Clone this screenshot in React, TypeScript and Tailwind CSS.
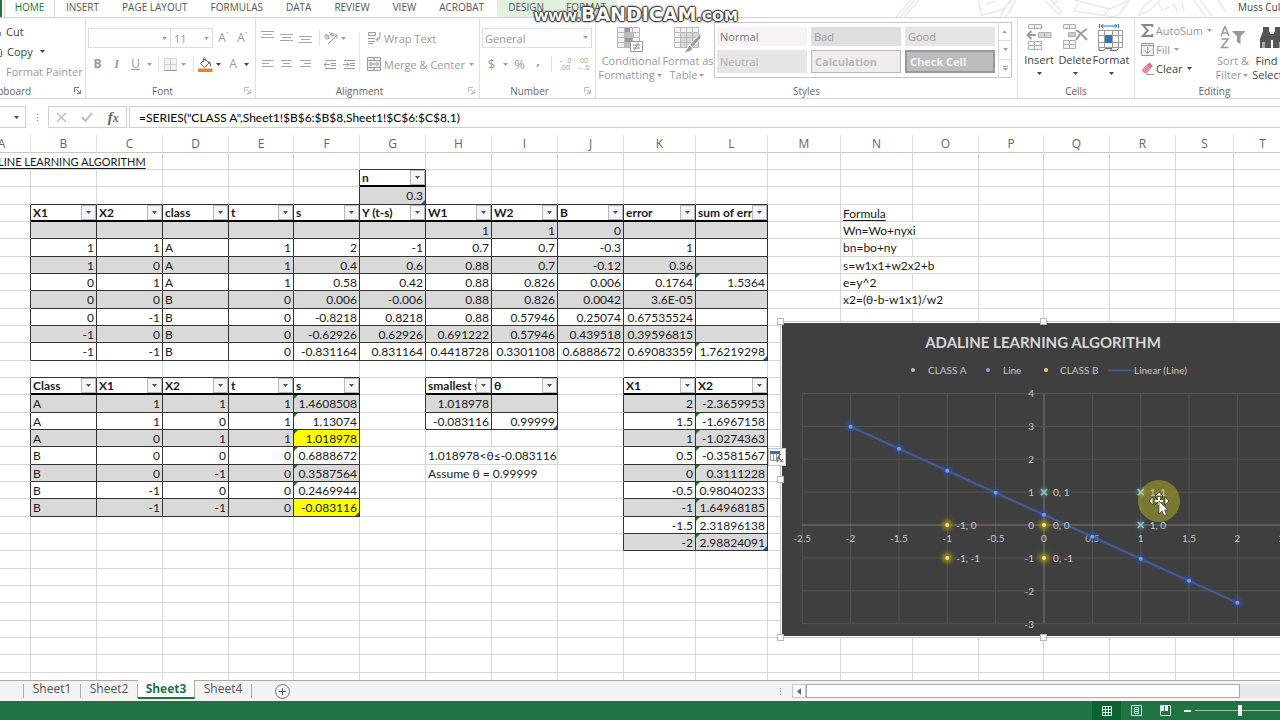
import React from "react";
import clsx from "clsx";

type Sheet = Record<string, string>;

const columns: [string, string][] = [
  ["A", "w-[58px]"],
  ["B", "w-[66px]"],
  ["C", "w-[66px]"],
  ["D", "w-[66px]"],
  ["E", "w-[65px]"],
  ["F", "w-[66px]"],
  ["G", "w-[66px]"],
  ["H", "w-[66px]"],
  ["I", "w-[66px]"],
  ["J", "w-[66px]"],
  ["K", "w-[72px]"],
  ["L", "w-[72px]"],
  ["M", "w-[73px]"],
  ["N", "w-[72px]"],
  ["O", "w-[66px]"],
  ["P", "w-[65px]"],
  ["Q", "w-[66px]"],
  ["R", "w-[66px]"],
  ["S", "w-[58px]"],
  ["T", "w-[58px]"],
];

const letters = columns.map((c) => c[0]);

const tables = [
  { col: "G", row: 2, data: [["n"], ["0.3"]] },
  {
    col: "B",
    row: 4,
    data: [
      ["X1", "X2", "class", "t", "s", "Y (t-s)", "W1", "W2", "B", "error", "sum of error"],
      ["", "", "", "", "", "", "1", "1", "0", "", ""],
      ["1", "1", "A", "1", "2", "-1", "0.7", "0.7", "-0.3", "1", ""],
      ["1", "0", "A", "1", "0.4", "0.6", "0.88", "0.7", "-0.12", "0.36", ""],
      ["0", "1", "A", "1", "0.58", "0.42", "0.88", "0.826", "0.006", "0.1764", "1.5364"],
      ["0", "0", "B", "0", "0.006", "-0.006", "0.88", "0.826", "0.0042", "3.6E-05", ""],
      ["0", "-1", "B", "0", "-0.8218", "0.8218", "0.88", "0.57946", "0.25074", "0.67535524", ""],
      ["-1", "0", "B", "0", "-0.62926", "0.62926", "0.691222", "0.57946", "0.439518", "0.39596815", ""],
      ["-1", "-1", "B", "0", "-0.831164", "0.831164", "0.4418728", "0.3301108", "0.6888672", "0.69083359", "1.76219298"],
    ],
  },
  {
    col: "B",
    row: 14,
    data: [
      ["Class", "X1", "X2", "t", "s"],
      ["A", "1", "1", "1", "1.4608508"],
      ["A", "1", "0", "1", "1.13074"],
      ["A", "0", "1", "1", "1.018978"],
      ["B", "0", "0", "0", "0.6888672"],
      ["B", "0", "-1", "0", "0.3587564"],
      ["B", "-1", "0", "0", "0.2469944"],
      ["B", "-1", "-1", "0", "-0.083116"],
    ],
  },
  {
    col: "H",
    row: 14,
    data: [
      ["smallest s", "θ"],
      ["1.018978", ""],
      ["-0.083116", "0.99999"],
    ],
  },
  {
    col: "K",
    row: 14,
    data: [
      ["X1", "X2"],
      ["2", "-2.3659953"],
      ["1.5", "-1.6967158"],
      ["1", "-1.0274363"],
      ["0.5", "-0.3581567"],
      ["0", "0.3111228"],
      ["-0.5", "0.98040233"],
      ["-1", "1.64968185"],
      ["-1.5", "2.31896138"],
      ["-2", "2.98824091"],
    ],
  },
];

const notes: Sheet = {
  A1: "ADALINE LEARNING ALGORITHM",
  N4: "Formula",
  N5: "Wn=Wo+nyxi",
  N6: "bn=bo+ny",
  N7: "s=w1x1+w2x2+b",
  N8: "e=y^2",
  N9: "x2=(θ-b-w1x1)/w2",
  H18: "1.018978<θ≤-0.083116",
  H19: "Assume θ = 0.99999",
};

const values: Sheet = {};
const headers = new Set<string>();
const corners = new Set<string>();

tables.forEach((t) => {
  const start = letters.indexOf(t.col);
  t.data.forEach((line, r) =>
    line.forEach((text, c) => {
      const key = letters[start + c] + (t.row + r);
      values[key] = text;
      if (r === 0) headers.add(key);
      if (r === t.data.length - 1 && c === line.length - 1) corners.add(key);
    })
  );
});

const underlined = ["A1", "N4"];
const highlighted = ["F17", "F21"];
// gridlines that disappear under text running into the next cell
const spilled = ["A1", "B1", "H18", "H19", "N5", "N7", "N9"];
const flagged = [
  "L8", "L12",
  "F15", "F16", "F17", "F18", "F19", "F20",
  "L16", "L17", "L18", "L19", "L20", "L21", "L22", "L23",
];

const Drop = ({ className = "w-[9px]", dark = false }) => (
  <span className={clsx("flex shrink-0 items-center justify-center", className)}>
    <svg width="5" height="3" viewBox="0 0 5 3">
      <path d="M0 0h5L2.5 3z" fill={dark ? "#444" : "#a0a0a0"} />
    </svg>
  </span>
);

const Divider = () => (
  <span className="flex h-4 w-[9px] shrink-0 justify-center">
    <span className="w-px bg-[#e1e1e1]" />
  </span>
);

const Tool = ({
  label,
  className = "w-[19px]",
  children,
}: {
  label: string;
  className?: string;
  children: React.ReactNode;
}) => (
  <button aria-label={label} className={clsx("flex h-5 shrink-0 items-center justify-center", className)}>
    {children}
  </button>
);

const Lines = ({ rows, y = 0 }: { rows: [number, number][]; y?: number }) => (
  <svg width="14" height="14" viewBox="0 0 14 14" stroke="#a6a6a6">
    {rows.map(([x, w], i) => (
      <path key={i} d={`M${x} ${y + 0.5 + i * 3}h${w}`} />
    ))}
  </svg>
);

const Launcher = ({ dark = false }) => (
  <svg width="7" height="7" viewBox="0 0 7 7" fill="none" stroke={dark ? "#777" : "#bbb"}>
    <path d="M.5 5V.5H5M2.5 2.5 6 6M6.500 3v3.500H3" />
  </svg>
);

const Group = ({
  name,
  className,
  launcher,
  children,
}: {
  name: string;
  className: string;
  launcher?: "light" | "dark";
  children: React.ReactNode;
}) => (
  <section className={clsx("flex flex-col border-r border-[#e1e1e1]", className)}>
    <div className="flex h-[65px]">{children}</div>
    <div className="flex h-[15px] items-center">
      <p className="flex-1 text-center text-[10px] leading-none text-[#666]">{name}</p>
      {launcher && (
        <button aria-label={`${name} settings`} className="mr-1 flex w-3 justify-end">
          <Launcher dark={launcher === "dark"} />
        </button>
      )}
    </div>
  </section>
);

const tabs = ["INSERT", "PAGE LAYOUT", "FORMULAS", "DATA", "REVIEW", "VIEW", "ACROBAT"];

const TabStrip = () => (
  <nav className="flex h-[18px] shrink-0 overflow-hidden border-b border-[#d4d4d4] text-[10px] leading-[14px] text-[#555]">
    <div className="w-[2px] shrink-0 bg-[#217346]" />
    <button className="ml-[2px] h-[18px] w-[51px] border-x border-[#d4d4d4] bg-white pb-1 text-[#217346]">HOME</button>
    <div className="flex gap-px">
      {tabs.map((t) => (
        <button key={t} className="h-[18px] px-[11px] pb-1 whitespace-nowrap">
          {t}
        </button>
      ))}
    </div>
    <div className="ml-[2px] flex bg-[#e2f0e0]">
      <button className="h-[18px] w-[58px] pb-1">DESIGN</button>
      <button className="h-[18px] w-[62px] pb-1">FORMAT</button>
    </div>
    <div className="flex-1" />
    <svg width="400" height="17" viewBox="860 0 400 17" fill="none" stroke="#e9e9e9" strokeWidth="1.500" className="shrink-0">
      <path d="M918 17 933 0M922 17 937 0M926 17 941 0" />
      <path d="M1000 0l4 15 20-5 10-10M1008 4l10-3M1022 17l10-17M1028 17l10-17" />
      <path d="M1067 0l14 15 2-4-10-11M1074 4l6-3" />
      <path d="M1096 0l36 9 20-9M1100 3l-4 8 40 6 6-4 10-13M1132 9l-6 6" />
      <path d="M1160 16l6-10 8-6M1160 16l12-6 10-10M1180 2l4 8 8-3M1195 4l5 8M1204 2l2 10" />
      <path d="M1216 0l12 17M1222 0l12 16M1240 0l8 12" />
    </svg>
    <span className="w-[42px] shrink-0 whitespace-nowrap text-[#444]">Muss Cul</span>
  </nav>
);

const Watermark = () => (
  <div
    className="pointer-events-none absolute top-1 left-[534px] flex items-baseline text-[14px] leading-[20px] font-bold text-white"
    style={{
      fontFamily: '"DejaVu Sans", sans-serif',
      textShadow: "1px 0 1px #333, -1px 0 1px #333, 0 1px 1px #333, 0 -1px 1px #333, 0 0 3px #333",
    }}
  >
    <span className="text-[13px]">WWW.</span>
    <span className="text-[19px]">BANDICAM</span>
    <span>.COM</span>
  </div>
);

const Clipboard = () => (
  <Group name="Clipboard" className="w-[138px]" launcher="dark">
    <div className="flex flex-1 flex-col gap-[6px] pt-[6px] pl-[41px] text-[#444]">
      <button className="flex h-[14px] items-center gap-[5px]">
        <svg width="12" height="12" viewBox="0 0 12 12" fill="none" stroke="#2f6eb5">
          <circle cx="10" cy="9" r="2" />
          <path d="M3 0l5 7" />
        </svg>
        Cut
      </button>
      <button className="flex h-[14px] items-center gap-[5px]">
        <svg width="12" height="12" viewBox="0 0 12 12" className="ml-px" fill="#fff" stroke="#666">
          <path d="M1.500.5h5v8h-5zM5.500 3.500h4l2 2v6h-6zM7 7.500h3M7 9.500h3" />
        </svg>
        Copy
        <Drop dark />
      </button>
      <button className="flex h-[14px] items-center gap-[5px] whitespace-nowrap text-[#999]">
        <svg width="12" height="12" viewBox="0 0 12 12" fill="#aaa">
          <path d="M8 1l3 3-2 1-3-2zM1 10l5-6 2 2-5 5z" />
        </svg>
        Format Painter
      </button>
    </div>
  </Group>
);

const FontGroup = () => (
  <Group name="Font" className="w-[170px]" launcher="light">
    <div className="flex flex-col gap-[6px] pt-[10px] pl-[2px] text-[#999]">
      <div className="flex h-5">
        <button aria-label="Font name" className="flex w-[83px] items-center justify-end border border-[#dcdcdc] bg-[#fdfdfd]">
          <Drop className="w-3" />
        </button>
        <button aria-label="Font size" className="mr-px flex w-[42px] items-center justify-between border border-l-0 border-[#dcdcdc] bg-[#fdfdfd] pl-[3px]">
          11
          <Drop className="w-3" />
        </button>
        <Tool label="Grow font">
          <span className="text-[12px]">A</span>
          <span className="mb-2 text-[7px]">ˆ</span>
        </Tool>
        <Tool label="Shrink font">
          <span className="text-[12px]">A</span>
          <span className="mb-2 text-[7px]">ˇ</span>
        </Tool>
      </div>
      <div className="flex h-5 items-center text-[12px]">
        <Tool label="Bold"><b>B</b></Tool>
        <Tool label="Italic"><i className="font-serif font-bold">I</i></Tool>
        <Tool label="Underline"><u>U</u></Tool>
        <Drop />
        <Divider />
        <Tool label="Borders" className="w-[14px]">
          <svg width="13" height="13" viewBox="0 0 13 13" fill="#f5eef3" stroke="#b5b0b5" strokeDasharray="1 1">
            <path d="M.5.5h12v12H.5zM6.500.5v12M.5 6.500h12" />
            <path d="M.5 12.500h12" stroke="#999" strokeDasharray="none" />
          </svg>
        </Tool>
        <Drop className="w-3" />
        <Divider />
        <Tool label="Fill color" className="w-[15px]">
          <svg width="15" height="15" viewBox="0 0 15 15">
            <path d="M0 11.500h14.500V15H0z" fill="#ed7d31" />
            <path d="M2.500 6.500 7 2l4 4-4.500 4.500z" fill="#fff" stroke="#666" />
            <path d="M5.500 5V1.500q1-1.500 2 0V4" fill="none" stroke="#666" />
            <path d="M10 4q3.500 0 3 6-1.500-1-1.500-4z" fill="#2f6eb5" />
          </svg>
        </Tool>
        <Drop className="w-[11px]" dark />
        <Tool label="Font color" className="w-[18px]">A</Tool>
        <Drop dark />
      </div>
    </div>
  </Group>
);

const Alignment = () => (
  <Group name="Alignment" className="w-[224px]" launcher="light">
    <div className="flex w-[103px] shrink-0 flex-col gap-[6px] pt-[10px] pl-[2px]">
      <div className="flex items-center">
        <Tool label="Top align"><Lines y={0} rows={[[0, 13], [2, 9], [0, 13]]} /></Tool>
        <Tool label="Middle align"><Lines y={3} rows={[[0, 13], [2, 9], [0, 13]]} /></Tool>
        <Tool label="Bottom align"><Lines y={5} rows={[[0, 13], [2, 9], [0, 13]]} /></Tool>
        <Divider />
        <Tool label="Orientation" className="w-[15px]">
          <svg width="15" height="14" viewBox="0 0 15 14" fill="none" stroke="#9a9a9a">
            <path d="M4 13 13 4M13 4H9.500M13 4v3.500" />
            <circle cx="3" cy="6" r="2" />
            <path d="M5.500 7.500 1.500 3M5 1l4 4.500" />
            <circle cx="8" cy="3.500" r="1.500" />
          </svg>
        </Tool>
        <Drop />
      </div>
      <div className="flex items-center">
        <Tool label="Align left"><Lines y={3} rows={[[1, 11], [1, 7], [1, 11]]} /></Tool>
        <Tool label="Center"><Lines y={3} rows={[[1, 11], [3, 7], [1, 11]]} /></Tool>
        <Tool label="Align right"><Lines y={3} rows={[[1, 11], [5, 7], [1, 11]]} /></Tool>
        <span className="w-[6px]" />
        <Tool label="Decrease indent">
          <svg width="13" height="9" viewBox="0 0 13 9" fill="none" stroke="#9a9a9a">
            <path d="M1 .5h11M7 3.500h5M7 5.500h5M1 8.500h11M0 4.500h6M2.500 2 0 4.500 2.500 7" />
          </svg>
        </Tool>
        <Tool label="Increase indent">
          <svg width="13" height="9" viewBox="0 0 13 9" fill="none" stroke="#9a9a9a">
            <path d="M1 .5h11M7 3.500h5M7 5.500h5M1 8.500h11M0 4.500h6M3.500 2 6 4.500 3.500 7" />
          </svg>
        </Tool>
      </div>
    </div>
    <div className="mt-[14px] mr-[7px] h-10 w-px bg-[#e8e8e8]" />
    <div className="flex flex-col gap-[6px] pt-[10px] whitespace-nowrap text-[#999]">
      <button className="flex h-5 items-center gap-[2px]">
        <svg width="15" height="14" viewBox="0 0 15 14" fill="none" stroke="#9a9a9a">
          <path d="M1.500 1.500h7v3h-7zM1 7.500h7M1 10.500h7M1 12.500h5M13 1v5q0 3-3.500 2.500M11.500 6 9 8.500l2.500 2.500" />
        </svg>
        Wrap Text
      </button>
      <button className="flex h-5 items-center gap-[2px]">
        <svg width="15" height="14" viewBox="0 0 15 14" fill="#eee" stroke="#9a9a9a">
          <path d="M.5.5h13v13H.5zM.5 3.500h13M.5 10.500h13M7 .5v3M7 10.500v3" />
          <path d="M2.500 7h9M4.500 5l-2 2 2 2M9.500 5l2 2-2 2" fill="none" />
        </svg>
        Merge &amp; Center
        <Drop />
      </button>
    </div>
  </Group>
);

const NumberGroup = () => (
  <Group name="Number" className="w-[116px]" launcher="light">
    <div className="flex flex-col gap-[6px] pt-[10px] pl-[2px] text-[#999]">
      <div className="relative">
        <select aria-label="Number format" className="h-5 w-[110px] appearance-none border border-[#dcdcdc] bg-[#fdfdfd] pl-[2px] outline-none">
          <option>General</option>
        </select>
        <Drop className="absolute top-2 right-1 w-[5px]" />
      </div>
      <div className="flex h-5 items-center text-[13px]">
        <Tool label="Currency">$</Tool>
        <Drop />
        <Tool label="Percent">%</Tool>
        <Tool label="Comma style" className="w-[18px]"><b className="mb-2">,</b></Tool>
        <Divider />
        <Tool label="Increase decimal" className="w-[18px]">
          <span className="text-[7px] leading-[7px]">←.0<br />.00</span>
        </Tool>
        <Tool label="Decrease decimal" className="w-[18px]">
          <span className="text-[7px] leading-[7px]">.00<br />→.0</span>
        </Tool>
      </div>
    </div>
  </Group>
);

const styles = [
  ["Normal", "bg-[#f7f2f6] text-[#777]"],
  ["Bad", "bg-[#e0dee1] text-[#999]"],
  ["Good", "bg-[#e6e4e7] text-[#999]"],
  ["Neutral", "bg-[#e8e4e8] text-[#b0aeb0]"],
  ["Calculation", "border border-[#bbb] bg-[#f1ebf0] font-bold text-[#bbb6ba]"],
  ["Check Cell", "border-2 border-[#999] bg-[#bdbbbe] font-bold text-[#f4f4f4]"],
];

const Styles = () => (
  <Group name="Styles" className="min-w-[422px] flex-1">
    <button className="mt-[9px] ml-1 flex w-[62px] flex-col items-center leading-[14px] text-[#999]">
      <svg width="28" height="27" viewBox="0 0 28 27" fill="#f2f0f2" stroke="#b8b8b8">
        <path d="M.5.5h22v20H.5zM.5 5.500h22M.5 10.500h22M.5 15.500h22M7.500.5v20M15.500.5v20" />
        <path d="M8 1h5v4H8zM8 11h7v4H8z" fill="#999" stroke="none" />
        <path d="M8 6h9v4H8zM8 16h5v4H8z" fill="#bbb" stroke="none" />
        <path d="M13.500 14.500h12v10h-12z" fill="#fff" stroke="#999" />
        <path d="M16 18h7M16 21h7M21.500 16l-4 7" stroke="#888" />
      </svg>
      Conditional
      <span className="flex">
        Formatting
        <Drop />
      </span>
    </button>
    <button className="mt-[9px] flex w-[52px] flex-col items-center leading-[14px] whitespace-nowrap text-[#999]">
      <svg width="28" height="27" viewBox="0 0 28 27" fill="#f4f2f4" stroke="#b8b8b8">
        <path d="M.5.5h24v20H.5z" />
        <path d="M6 6h18v14H6z" fill="#d8d6d8" stroke="none" />
        <path d="M.5 5.500h24M.5 10.500h24M.5 15.500h24M6.500.5v20M12.500.5v20M18.500.5v20" />
        <path d="M27 6v5l-9 10-3-2.500z" fill="#999" stroke="#fff" />
        <path d="M15 18q4 1 3.500 4-2 4-9 3 3-1 5.500-7z" fill="#999" stroke="#fff" />
      </svg>
      Format as
      <span className="flex">
        Table
        <Drop />
      </span>
    </button>
    <div className="mt-1 mr-[5px] flex h-[56px] flex-1 border border-[#c6c6c6] bg-white">
      <div className="grid flex-1 grid-cols-3 gap-1 py-1 pr-[3px] pl-[2px] text-[11px]">
        {styles.map(([name, look]) => (
          <button key={name} className={clsx("flex items-center pl-[3px] text-left", look)}>
            {name}
          </button>
        ))}
      </div>
      <div className="flex w-[13px] flex-col border-l border-[#dcdcdc]">
        <button aria-label="Previous styles" className="flex flex-1 rotate-180 items-center justify-center"><Drop /></button>
        <button aria-label="Next styles" className="flex flex-1 items-center justify-center border-y border-[#dcdcdc]"><Drop /></button>
        <button aria-label="More styles" className="flex flex-1 flex-col items-center justify-center gap-px">
          <span className="h-px w-[5px] bg-[#a0a0a0]" />
          <Drop />
        </button>
      </div>
    </div>
  </Group>
);

const cellButtons = [
  {
    name: "Insert",
    icon: (
      <svg width="26" height="27" viewBox="0 0 26 27" fill="#f2f2f2" stroke="#b0b0b0">
        <path d="M2.500.5h6v4h-6zM8.500.5h7v4h-7zM2.500 17.500h6v4h-6zM8.500 17.500h7v4h-7zM2.500 21.500h6v4h-6zM8.500 21.500h7v4h-7z" />
        <path d="M12.500 8.500h6v5h-6zM18.500 8.500h6.500v5h-6.500z" fill="#d4d4d4" />
        <path d="M10 11H2M5.500 7 1.500 11l4 4" fill="none" stroke="#999" strokeWidth="2" />
      </svg>
    ),
  },
  {
    name: "Delete",
    icon: (
      <svg width="26" height="27" viewBox="0 0 26 27" fill="#f2f2f2" stroke="#b0b0b0">
        <path d="M1.500.5h6v4h-6zM7.500.5h6v4h-6zM1.500 16.500h6v4h-6zM7.500 16.500h6v4h-6zM1.500 20.500h6v4h-6zM7.500 20.500h6v4h-6z" />
        <path d="M6.500 8.500h7v4h-7z" fill="#ccc" />
        <path d="M14 6q5 3 11 10M25 5q-7 4-11 11" fill="none" stroke="#999" strokeWidth="2" />
      </svg>
    ),
  },
  {
    name: "Format",
    icon: (
      <svg width="26" height="27" viewBox="0 0 26 27" fill="#fff" stroke="#999">
        <path d="M1.500 0v4M20.500 0v4M3 2h16M5.500 0 3 2l2.500 2M16.500 0 19 2l-2.500 2" fill="none" stroke="#2f75b5" />
        <path d="M.5 6.500h24v17h-24zM.5 11.500h24M.5 18.500h24M6.500 6.500v17M14.500 6.500v17M20.500 6.500v17" />
        <path d="M1 24v2.500h4l3-2h6l-2 2h6l3-2" fill="none" stroke="#666" />
        <path d="M7 11h7v8H7z" fill="#2f75b5" stroke="none" />
      </svg>
    ),
  },
];

const Cells = () => (
  <Group name="Cells" className="w-[117px]">
    <div className="flex pt-[6px] pl-[3px] text-[#444]">
      {cellButtons.map((b) => (
        <button key={b.name} className="flex w-9 flex-col items-center text-[11px] leading-[14px]">
          {b.icon}
          <span className="mt-[2px]">{b.name}</span>
          <Drop className="h-3 w-[9px]" dark />
        </button>
      ))}
    </div>
  </Group>
);

const Editing = () => (
  <Group name="Editing" className="w-[160px]">
    <div className="flex w-[79px] shrink-0 flex-col gap-1 pt-[5px] pl-[6px] text-[11px] text-[#999]">
      <button className="flex h-[15px] items-center gap-[2px]">
        <svg width="13" height="13" viewBox="0 0 13 13" fill="none" stroke="#888" strokeWidth="2">
          <path d="M11.500 3V1H2l5 5.500L2 12h9.500v-2" />
        </svg>
        AutoSum
        <Drop className="ml-auto w-[9px]" />
      </button>
      <button className="flex h-[15px] items-center gap-[2px]">
        <svg width="13" height="13" viewBox="0 0 13 13" fill="#f3eef2" stroke="#999">
          <path d="M.5.5h12v12H.5zM.5 2.500h12M6.500 4v6.500M3.500 7.500l3 3 3-3" />
        </svg>
        Fill
        <Drop />
      </button>
      <button className="flex h-[15px] items-center gap-[2px] text-[#444]">
        <svg width="13" height="13" viewBox="0 0 13 13">
          <path d="M8.500.5 12 4l-3 3-4-3.500z" fill="#e0708f" />
          <path d="M4.500 4 9 7.500 5.500 11H3.500L1 8.500z" fill="#e58ba5" stroke="#c06080" strokeWidth=".5" />
          <path d="M5 12.500h8" stroke="#999" />
        </svg>
        Clear
        <Drop dark />
      </button>
    </div>
    <button className="mt-2 flex w-[38px] shrink-0 flex-col items-center text-[11px] leading-[14px] whitespace-nowrap text-[#999]">
      <svg width="26" height="24" viewBox="0 0 26 24" fill="none" stroke="#999" strokeWidth="1.500" className="mb-1">
        <path d="M1 10 5 .5 9 10M2.500 7h5M1.500 13H8l-6.500 8.500H8.500" />
        <path d="M12 5h13.500L20.500 10.500V18l-3.500-2v-5.500z" fill="#999" stroke="none" />
      </svg>
      Sort &amp;
      <span className="flex">
        Filter
        <Drop />
      </span>
    </button>
    <button className="mt-2 flex w-[40px] shrink-0 flex-col items-center text-[11px] leading-[14px] whitespace-nowrap text-[#444]">
      <svg width="26" height="24" viewBox="0 0 26 24" fill="#555" className="mb-1">
        <path d="M4 1h6v4l2 4v13H1v-9l3-8zM16 1h6v4l3 8v9H14V9l2-4z" />
        <path d="M11 8h4v6h-4z" />
        <path d="M3 16h3v6H3zM20 16h3v6h-3z" fill="#aaa" />
      </svg>
      Find &amp;
      <span className="flex">
        Select
        <Drop dark />
      </span>
    </button>
  </Group>
);

const Ribbon = () => (
  <div className="flex h-[81px] shrink-0 overflow-hidden border-b border-[#d4d4d4] text-[11px] leading-none">
    <div className="-ml-[52px] flex flex-1 *:shrink-0">
      <Clipboard />
      <FontGroup />
      <Alignment />
      <NumberGroup />
      <Styles />
      <Cells />
      <Editing />
    </div>
  </div>
);

const FormulaBar = () => (
  <div className="flex h-[36px] shrink-0 items-start pt-[7px]">
    <button aria-label="Name box" className="flex h-[22px] w-[26px] items-center justify-end border border-l-0 border-[#cfcfcf]">
      <Drop className="w-[17px]" dark />
    </button>
    <div className="flex h-[22px] w-[22px] flex-col items-center justify-center gap-[2px]">
      <span className="size-px bg-[#888]" />
      <span className="size-px bg-[#888]" />
      <span className="size-px bg-[#888]" />
    </div>
    <div className="flex h-[22px] w-[79px] items-center justify-around border border-[#cfcfcf] text-[#c0c0c0]">
      <button aria-label="Cancel">
        <svg width="11" height="11" viewBox="0 0 11 11" fill="none" stroke="currentColor" strokeWidth="1.500">
          <path d="M1 1l9 9M10 1l-9 9" />
        </svg>
      </button>
      <button aria-label="Enter">
        <svg width="12" height="10" viewBox="0 0 12 10" fill="none" stroke="currentColor" strokeWidth="2">
          <path d="M1 5l3.500 4L11 1" />
        </svg>
      </button>
      <button className="font-[Liberation_Serif,serif] text-[15px] leading-none font-bold text-[#666] italic">
        f<span className="text-[12px]">x</span>
      </button>
    </div>
    <input
      aria-label="Formula"
      className="ml-[2px] h-[22px] flex-1 border border-r-0 border-[#cfcfcf] px-[9px] font-[Lato,sans-serif] text-[12px] text-black outline-none"
      defaultValue={'=SERIES("CLASS A",Sheet1!$B$6:$B$8,Sheet1!$C$6:$C$8,1)'}
    />
  </div>
);

const Cell = ({ col, row }: { col: number; row: number }) => {
  const key = letters[col] + row;
  const right = letters[col + 1] + row;
  const below = letters[col] + (row + 1);
  const inTable = key in values;
  const header = headers.has(key);
  const text = values[key] ?? notes[key];
  const numeric = inTable && !header && /^-?\d/.test(text);

  return (
    <td
      className={clsx(
        "relative border-r border-b px-[2px] pt-px pb-0 whitespace-nowrap",
        inTable || right in values
          ? "border-r-[#333]"
          : spilled.includes(key)
            ? "border-r-transparent"
            : "border-r-[#d6d6d6]",
        inTable || below in values ? "border-b-[#333]" : "border-b-[#d6d6d6]",
        header && "overflow-hidden border-b-2 border-b-black font-bold",
        numeric && "text-right",
        row === 1 && "text-[11px]",
        underlined.includes(key) && "underline underline-offset-2",
        highlighted.includes(key) ? "bg-[#ffff00]" : inTable && row % 2 === 1 && "bg-[#d9d9d9]"
      )}
    >
      {text}
      {header && (
        <button
          aria-label={`Filter ${text}`}
          className="absolute right-0 bottom-0 flex h-[15px] w-[15px] items-center justify-center border border-[#b4b8bf] bg-[#f3f5f9]"
        >
          <svg width="5" height="3" viewBox="0 0 5 3">
            <path d="M0 0h5L2.500 3z" fill="#555" />
          </svg>
        </button>
      )}
      {flagged.includes(key) && (
        <span className="absolute top-0 left-0 border-t-4 border-r-4 border-t-[#127a1e] border-r-transparent" />
      )}
      {corners.has(key) && (
        <span className="absolute right-0 bottom-0 border-b-4 border-l-4 border-b-[#3b4ba0] border-l-transparent" />
      )}
    </td>
  );
};

const rows = Array.from({ length: 31 }, (_, i) => i + 1);

const Grid = () => (
  <table className="-ml-[27px] w-[1319px] table-fixed border-separate border-spacing-0 font-[Lato,sans-serif] text-[12px] leading-[14px] text-[#1a1a1a]">
    <colgroup>
      {columns.map(([name, width]) => (
        <col key={name} className={width} />
      ))}
    </colgroup>
    <thead>
      <tr className="h-[18px]">
        {letters.map((l) => (
          <th key={l} className="border-r border-b border-r-[#e2e2e2] border-b-[#c8c8c8] p-0 font-[Open_Sans,sans-serif] text-[12px] font-normal text-[#666]">
            {l}
          </th>
        ))}
      </tr>
    </thead>
    <tbody>
      {rows.map((row) => (
        <tr key={row} className="h-[17px] nth-[3n]:h-[18px]">
          {letters.map((l, col) => (
            <Cell key={l} col={col} row={row} />
          ))}
        </tr>
      ))}
    </tbody>
  </table>
);

// chart scale
const px = (v: number) => 264 + v * 96.7;
const py = (v: number) => 204 - v * 32.9;

const xTicks = [-2.5, -2, -1.5, -1, -0.5, 0, 0.5, 1, 1.5, 2, 2.5];
const yTicks = [4, 3, 2, 1, 0, -1, -2, -3];

const line = [
  [-2, 2.98824091],
  [-1.5, 2.31896138],
  [-1, 1.64968185],
  [-0.5, 0.98040233],
  [0, 0.3111228],
  [0.5, -0.3581567],
  [1, -1.0274363],
  [1.5, -1.6967158],
  [2, -2.3659953],
];
const classA = [[1, 1], [1, 0], [0, 1]];
const classB = [[0, 0], [-1, 0], [0, -1], [-1, -1]];

const Handle = ({ className }: { className: string }) => (
  <span className={clsx("absolute size-[7px] border border-[#b8b8b8] bg-white", className)} />
);

const Chart = () => (
  <div className="absolute top-[186px] left-[780px] h-[317px] w-[527px] border border-[#c4c4c4] bg-white p-px">
    <svg width="523" height="313" viewBox="2 2 523 313" fontFamily="Lato, sans-serif" fontSize="10" fill="#c8c8c8">
      <defs>
        <filter id="glow" x="-100%" y="-100%" width="300%" height="300%">
          <feGaussianBlur stdDeviation="2" />
        </filter>
      </defs>
      <rect x="2" y="2" width="523" height="313" fill="#3f3f3f" />
      <text x="263" y="27" fontSize="15" fontWeight="700" textAnchor="middle" fill="#d6d6d6">ADALINE LEARNING ALGORITHM</text>

      <circle cx="133" cy="49" r="2" fill="#b4cba5" />
      <text x="148" y="53">CLASS A</text>
      <circle cx="208" cy="49" r="2" fill="#8ea0d4" />
      <text x="223" y="53">Line</text>
      <circle cx="266" cy="49" r="2" fill="#f5d46a" />
      <text x="280" y="53">CLASS B</text>
      <path d="M328 49.500h24" stroke="#41598f" strokeWidth="2" />
      <text x="354" y="53">Linear (Line)</text>

      <g stroke="#545454">
        {xTicks.map((v) => (
          <path key={v} d={`M${px(v)} ${py(4)}V${py(-3)}`} stroke={v === 0 ? "#7c7c7c" : undefined} />
        ))}
        {yTicks.map((v) => (
          <path key={v} d={`M${px(-2.5)} ${py(v)}H${px(2.5)}`} stroke={v === 0 ? "#7c7c7c" : undefined} />
        ))}
      </g>
      {xTicks.map((v) => (
        <text key={v} x={px(v)} y="221" textAnchor="middle">{v}</text>
      ))}
      {yTicks.map((v) => (
        <text key={v} x="254" y={py(v) + 4} textAnchor="end">{v}</text>
      ))}

      <path d={`M${px(-2)} ${py(2.988)}L${px(2)} ${py(-2.366)}`} stroke="#2f5fc8" strokeWidth="4" opacity=".15" />
      <path d={`M${px(-2)} ${py(2.988)}L${px(2)} ${py(-2.366)}`} stroke="#445c96" strokeWidth="2" />
      {line.map(([x, y]) => (
        <g key={x}>
          <circle cx={px(x)} cy={py(y)} r="4" fill="#2457c0" opacity=".8" filter="url(#glow)" />
          <circle cx={px(x)} cy={py(y)} r="2" fill="#7c9be0" />
        </g>
      ))}
      {classB.map(([x, y]) => (
        <g key={`${x},${y}`}>
          <circle cx={px(x)} cy={py(y)} r="5" fill="#b09c10" opacity=".8" filter="url(#glow)" />
          <circle cx={px(x)} cy={py(y)} r="2" fill="#fbe488" />
          <text x={px(x) + 9} y={py(y) + 4}>{`${x}, ${y}`}</text>
        </g>
      ))}
      {classA.map(([x, y]) => (
        <g key={`${x},${y}`}>
          <circle cx={px(x)} cy={py(y)} r="4" fill="#4a8f84" opacity=".8" filter="url(#glow)" />
          <path
            d={`M${px(x) - 3} ${py(y) - 3}l6 6m0 -6l-6 6`}
            stroke="#9cc6cc"
            strokeWidth="1.500"
          />
          <text x={px(x) + 9} y={py(y) + 4}>{`${x}, ${y}`}</text>
        </g>
      ))}
    </svg>
    <Handle className="-top-[4px] -left-[4px]" />
    <Handle className="-top-[4px] left-[259px]" />
    <Handle className="top-[154px] -left-[4px]" />
    <Handle className="-bottom-[4px] -left-[4px]" />
    <Handle className="-bottom-[4px] left-[259px]" />
    <button aria-label="Quick analysis" className="absolute top-[126px] -left-[13px] size-[18px] border border-[#c8c8c8] bg-white">
      <svg width="16" height="16" viewBox="0 0 16 16" fill="none" stroke="#999">
        <path d="M1.500 3.500h9v8h-9zM4.500 3.500v8M7.500 3.500v8" />
        <path d="M1 2h10v3H1z" fill="#2f75b5" stroke="none" />
        <path d="M12 5.500q-2-.5-2.500 2.500L8 13.500M7.500 9h3.500M11 10l3 3.500M14 10l-3 3.500" stroke="#555" />
      </svg>
    </button>
    <svg width="44" height="44" viewBox="0 0 44 44" className="absolute top-[157px] left-[356px]">
      <circle cx="22" cy="22" r="21" fill="#d8cf20" opacity=".4" />
      <path d="M22 17l-4 0 4-4 4 4zM16 18v8l-4-4zM28 18v8l4-4z" fill="#fff" stroke="#222" strokeWidth=".7" />
      <path d="M18 18l8 8M26 18l-8 8" stroke="#222" />
      <path d="M22 18v8M18 22h8" stroke="#fff" strokeWidth="2" />
      <path d="M22 22v13l3-3 2 4.500 2.500-1-2-4.500H31z" fill="#fff" stroke="#333" strokeWidth=".7" />
    </svg>
  </div>
);

const SheetTab = ({ name }: { name: string }) => (
  <button className="my-[3px] flex w-[57px] items-center justify-center border-r border-[#ababab] pb-1 leading-none">
    {name}
  </button>
);

const SheetTabs = () => (
  <div className="flex h-[21px] shrink-0 border-t border-[#ababab] bg-[#f3f3f3] text-[12px] text-[#555]">
    <div className="my-[3px] w-[24px] border-r border-[#ababab]" />
    <SheetTab name="Sheet1" />
    <SheetTab name="Sheet2" />
    <button className="-mt-px h-[19px] w-[57px] border-r border-b-2 border-[#ababab] border-b-[#217346] bg-white leading-none font-bold text-[#217346]">
      Sheet3
    </button>
    <SheetTab name="Sheet4" />
    <button aria-label="New sheet" className="ml-[23px]">
      <svg width="15" height="15" viewBox="0 0 15 15" fill="none" stroke="#777" className="mt-px">
        <circle cx="7.500" cy="7.500" r="7" />
        <path d="M7.500 4v7M4 7.500h7" stroke="#555" />
      </svg>
    </button>
    <div className="flex-1" />
    <div className="flex w-[24px] flex-col items-center justify-center gap-[2px]">
      <span className="size-px bg-[#888]" />
      <span className="size-px bg-[#888]" />
      <span className="size-px bg-[#888]" />
    </div>
    <div className="mt-[3px] flex h-[14px] w-[488px] bg-[#e8e8e8]">
      <button aria-label="Scroll left" className="flex w-[14px] items-center justify-center border border-[#c6c6c6] bg-white">
        <svg width="4" height="7" viewBox="0 0 4 7">
          <path d="M4 0v7L0 3.500z" fill="#666" />
        </svg>
      </button>
      <div className="w-[434px] border border-[#ababab] bg-white" />
    </div>
  </div>
);

const StatusBar = () => (
  <footer className="flex h-[19px] shrink-0 items-center justify-end bg-[#217346]">
    <button aria-label="Normal view" className="flex h-full w-[29px] items-center justify-center bg-[#0a6332]">
      <svg width="10" height="10" viewBox="0 0 10 10" fill="none" stroke="#dff0e5">
        <path d="M.5.5h9v9h-9zM3.500 0v10M6.500 0v10M0 3.500h10M0 6.500h10" />
      </svg>
    </button>
    <button aria-label="Page layout view" className="flex h-full w-[30px] items-center justify-center">
      <svg width="11" height="11" viewBox="0 0 11 11" fill="none" stroke="#cfe6d8">
        <path d="M.5.5h10v10H.5zM3.500 2.500h4v6h-4zM4 4.500h3M4 6.500h3" />
      </svg>
    </button>
    <button aria-label="Page break preview" className="flex h-full w-[29px] items-center justify-center">
      <svg width="11" height="11" viewBox="0 0 11 11" fill="none" stroke="#cfe6d8">
        <path d="M.5.5h10v10H.5z" />
        <path d="M1 1h3v5H1zM5 1h3v5H5z" fill="#fff" stroke="none" />
      </svg>
    </button>
    <button aria-label="Zoom out" className="mx-1 h-[2px] w-[7px] bg-white" />
    <input
      type="range"
      aria-label="Zoom"
      defaultValue={53}
      className="h-[11px] w-[85px] appearance-none bg-[linear-gradient(#9cc4ad,#9cc4ad)] bg-size-[100%_1px] bg-center bg-no-repeat [&::-webkit-slider-thumb]:h-[11px] [&::-webkit-slider-thumb]:w-1 [&::-webkit-slider-thumb]:appearance-none [&::-webkit-slider-thumb]:bg-white"
    />
  </footer>
);

export default function App() {
  return (
    <div className="relative flex h-screen flex-col overflow-hidden bg-white font-[Open_Sans,sans-serif]">
      <TabStrip />
      <Ribbon />
      <FormulaBar />
      <main className="relative flex-1 overflow-hidden">
        <Grid />
        <Chart />
      </main>
      <SheetTabs />
      <StatusBar />
      <Watermark />
    </div>
  );
}
